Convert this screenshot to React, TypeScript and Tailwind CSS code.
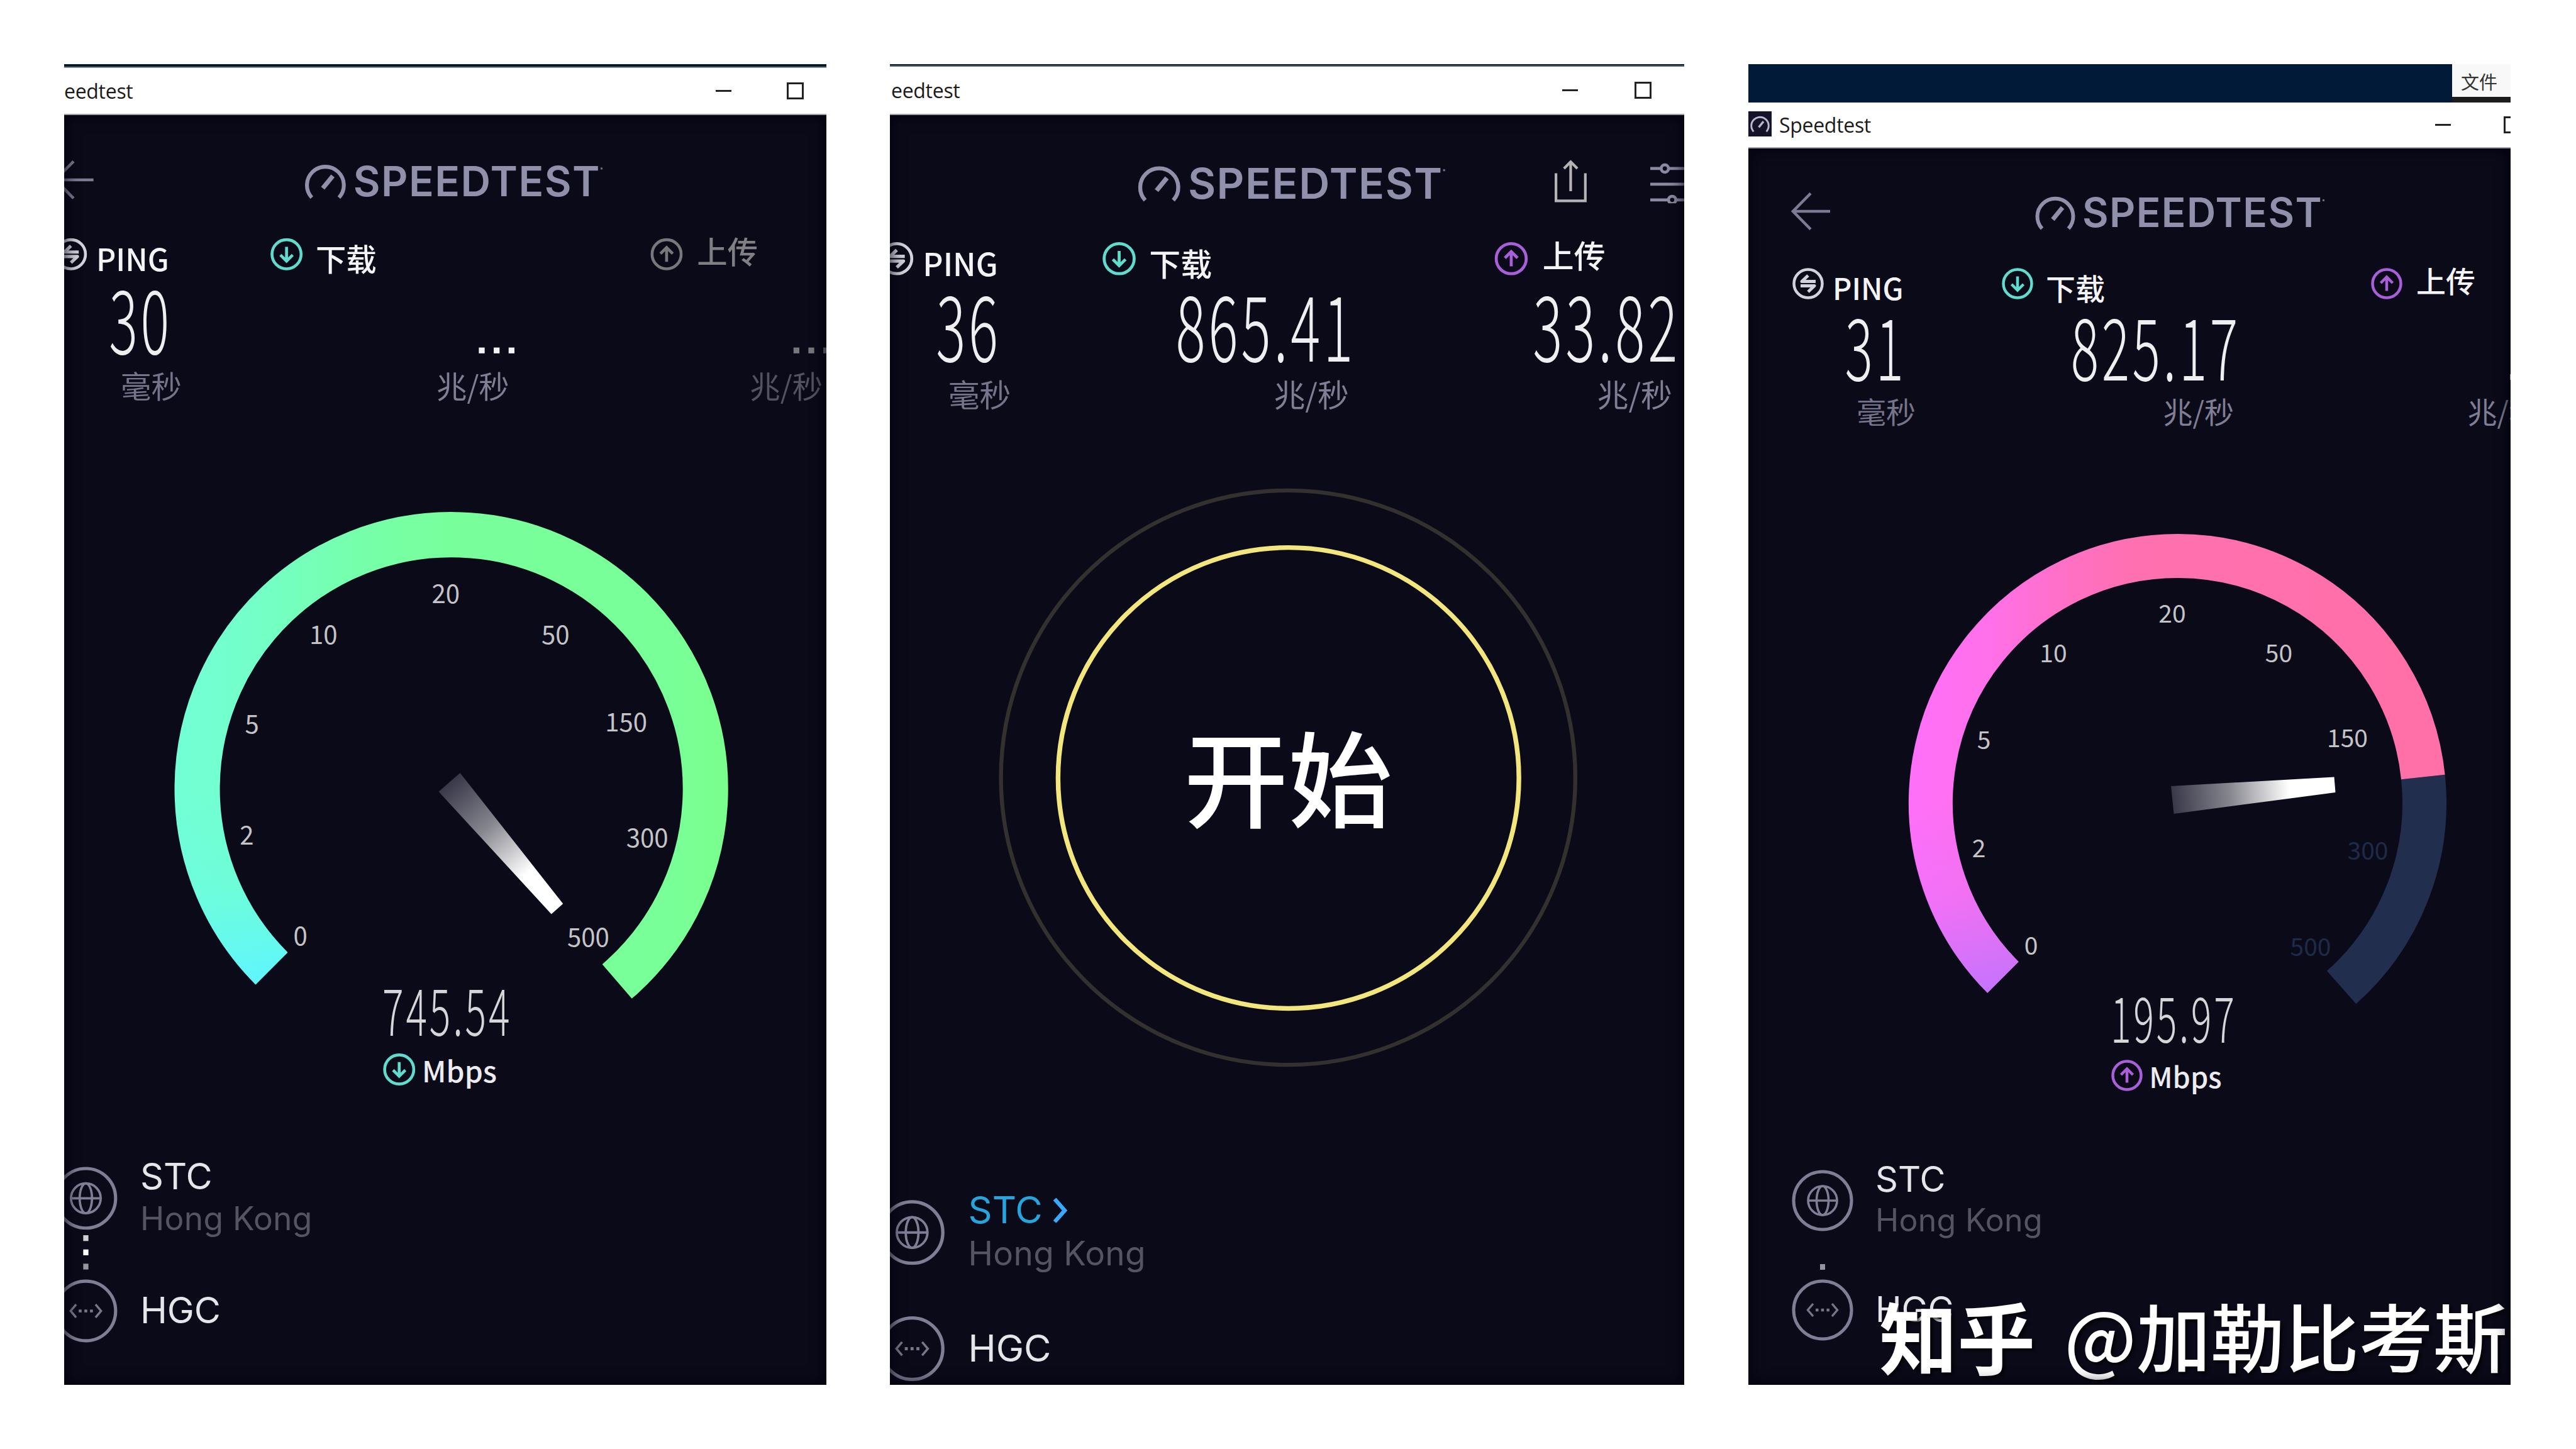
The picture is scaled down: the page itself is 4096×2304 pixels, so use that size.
import type { ReactNode } from "react";

const CJK = "font-['Noto_Sans_CJK_SC',sans-serif]";

type Tone = "mint" | "violet" | "idle" | "light";

const toneColor: Record<Tone, string> = {
  mint: "#5fdccb",
  violet: "#a95fd8",
  idle: "#77777c",
  light: "#d2d2dc",
};

function MeterGlyph({ className, stroke = "#9190aa" }: { className: string; stroke?: string }) {
  return (
    <svg viewBox="0 0 64 58" className={className} fill="none" stroke={stroke} strokeWidth="6">
      <path d="M11 54.5 A28.5 28.5 0 1 1 53 54.5" />
      <path d="M28 40 L43.5 21" strokeWidth="7" />
    </svg>
  );
}

function CircleIcon({ tone, kind }: { tone: Tone; kind: "down" | "up" | "ping" }) {
  const c = toneColor[tone];
  return (
    <svg viewBox="0 0 50 50" className="size-[50px] shrink-0" fill="none" stroke={c} strokeWidth="4.5">
      <circle cx="25" cy="25" r="22.5" />
      {kind === "down" && <path d="M25 13.5 V35 M15.5 26 L25 35.5 L34.5 26" />}
      {kind === "up" && <path d="M25 36.5 V15 M15.5 24 L25 14.5 L34.5 24" />}
      {kind === "ping" && (
        <path d="M37 21.5 H15 L25 12 M13 28.5 H35 L25 38" strokeWidth="5" strokeLinejoin="round" />
      )}
    </svg>
  );
}

function BackArrow() {
  return (
    <svg viewBox="0 0 62 60" className="h-[60px] w-[62px]" fill="none" stroke="#7c7b93" strokeWidth="4.5">
      <path d="M62 30 H3 M31 1.5 L3 30 L31 58.5" />
    </svg>
  );
}

function ShareIcon() {
  return (
    <svg viewBox="0 0 48 64" className="h-[64px] w-[48px]" fill="none" stroke="#b5b3b5" strokeWidth="4">
      <path d="M2 20 V61.5 H46 V20" />
      <path d="M24 47 V3 M14 13 L24 3 L34 13" />
    </svg>
  );
}

function SlidersIcon() {
  return (
    <svg viewBox="0 0 64 64" className="h-[64px] w-[64px]" fill="none" stroke="#8b8aa2" strokeWidth="4.5">
      <path d="M0 12 H15 M29 12 H64 M0 35.5 H64 M0 59 H26 M40 59 H64" />
      <circle cx="22" cy="12" r="5.5" />
      <circle cx="33" cy="59" r="5.5" />
    </svg>
  );
}

function Header({ back, tools }: { back: boolean; tools: boolean }) {
  return (
    <div className="flex h-[190px] items-start">
      <div className="mt-[70px] ml-[68px] h-[60px] w-[62px]">{back && <BackArrow />}</div>
      <div className="mt-[73px] ml-[326px] flex w-[623px] items-start">
        <MeterGlyph className="h-[58px] w-[64px]" />
        <span className="mt-[-2px] ml-[11px] font-['Inter',sans-serif] text-[64px] leading-[62px] font-semibold tracking-[1.4px] text-[#9190aa]">
          SPEEDTEST
        </span>
        <span className="mt-[8px] size-[3px] bg-[#6d6c84]" />
      </div>
      {tools && (
        <>
          <div className="mt-[67px] ml-[1px]">
            <ShareIcon />
          </div>
          <div className="mt-[68px] ml-[95px]">
            <SlidersIcon />
          </div>
        </>
      )}
    </div>
  );
}

function Ellipsis({ color }: { color: string }) {
  return (
    <span className="mr-[3px] flex gap-[14px] pb-[6px]">
      {[0, 1, 2].map((i) => (
        <span key={i} className="size-[9px]" style={{ background: color }} />
      ))}
    </span>
  );
}

function Digits({ children, className }: { children: ReactNode; className: string }) {
  return (
    <span className={`inline-block scale-x-[0.61] ${CJK} font-light whitespace-nowrap ${className}`}>{children}</span>
  );
}

interface MetricProps {
  icon: ReactNode;
  label: string;
  labelClass: string;
  value: ReactNode;
  valueClass: string;
  unit: string;
  unitClass: string;
  className: string;
}

function Metric({ icon, label, labelClass, value, valueClass, unit, unitClass, className }: MetricProps) {
  return (
    <div className={`flex shrink-0 flex-col ${className}`}>
      <div className="flex h-[74px] items-start">
        {icon}
        <span className={`${CJK} font-medium whitespace-nowrap ${labelClass}`}>{label}</span>
      </div>
      <div className={`flex h-[110px] items-end justify-end ${valueClass}`}>{value}</div>
      <div className={`mt-[13px] flex h-[60px] justify-end ${CJK} text-[47px] leading-[60px] whitespace-nowrap ${unitClass}`}>
        {unit}
      </div>
    </div>
  );
}

interface GaugeProps {
  id: string;
  stops: [string, string][];
  startColor: string;
  endAngle: number;
  splitAngle?: number;
  needle: string;
  needleLine: [number, number, number, number];
}

const ticks: [string, number, number][] = [
  ["0", 267.5, 668],
  ["2", 184.5, 513],
  ["5", 192.5, 341],
  ["10", 303, 203],
  ["20", 492, 140],
  ["50", 661.5, 203],
  ["150", 770.5, 338],
  ["300", 803, 517],
  ["500", 712, 670],
];

function point(deg: number, r: number) {
  const a = (deg * Math.PI) / 180;
  return `${(500.5 + r * Math.cos(a)).toFixed(2)} ${(440.5 + r * Math.sin(a)).toFixed(2)}`;
}

function arc(from: number, to: number) {
  const large = to - from > 180 ? 1 : 0;
  return `M${point(from, 392.5)} A392.5 392.5 0 ${large} 1 ${point(to, 392.5)}`;
}

function Gauge({ id, stops, startColor, endAngle, splitAngle, needle, needleLine }: GaugeProps) {
  const filled = splitAngle ?? endAngle;
  const [x1, y1, x2, y2] = needleLine;
  return (
    <svg viewBox="0 0 1000 730" className="ml-[182px] h-[730px] w-[1000px] shrink-0 overflow-visible">
      <defs>
        <linearGradient id={`${id}-arc`} gradientUnits="userSpaceOnUse" x1="72" y1="440" x2="928" y2="440">
          {stops.map(([offset, color]) => (
            <stop key={offset} offset={offset} stopColor={color} />
          ))}
        </linearGradient>
        <linearGradient id={`${id}-start`} gradientUnits="userSpaceOnUse" x1="150" y1="430" x2="220" y2="740">
          <stop offset="0" stopColor={startColor} stopOpacity="0" />
          <stop offset="0.5" stopColor={startColor} stopOpacity="0.25" />
          <stop offset="1" stopColor={startColor} />
        </linearGradient>
        <linearGradient id={`${id}-needle`} gradientUnits="userSpaceOnUse" x1={x1} y1={y1} x2={x2} y2={y2}>
          <stop offset="0" stopColor="#393849" />
          <stop offset="0.35" stopColor="#85858e" />
          <stop offset="0.72" stopColor="#ffffff" />
        </linearGradient>
      </defs>
      {splitAngle !== undefined && (
        <path d={arc(splitAngle, endAngle)} fill="none" stroke="#212e4e" strokeWidth="70" />
      )}
      <path d={arc(-225, filled)} fill="none" stroke={`url(#${id}-arc)`} strokeWidth="70" />
      <path d={arc(-225, -170)} fill="none" stroke={`url(#${id}-start)`} strokeWidth="70" />
      <polygon points={needle} fill={`url(#${id}-needle)`} />
      {ticks.map(([label, x, y], i) => (
        <text
          key={label}
          x={x}
          y={y + 14}
          textAnchor="middle"
          className={`${CJK} text-[39px]`}
          fill={splitAngle !== undefined && i > 6 ? "#1f2a49" : "#c4c4c7"}
        >
          {label}
        </text>
      ))}
    </svg>
  );
}

function Readout({ value, icon }: { value: string; icon: ReactNode }) {
  return (
    <div className="flex w-[1353px] flex-col items-center">
      <div className="mt-[-3px] flex h-[104px] w-full justify-center">
        <Digits className="text-[100px] leading-[104px] tracking-[6px] text-[#d6d6da]">{value}</Digits>
      </div>
      <div className="mt-[18px] ml-[-23px] flex items-start">
        {icon}
        <span className={`${CJK} mt-[-1px] ml-[10px] text-[45px] leading-[54px] font-medium text-[#ececf0]`}>Mbps</span>
      </div>
    </div>
  );
}

function StartButton() {
  return (
    <div className="ml-[248px] flex h-[866px] w-[866px] items-center justify-center rounded-full border-[6px] border-[#33312e]">
      <button className="flex size-[697px] items-center justify-center rounded-full border-[7px] border-[#f3e67d]">
        <span className={`${CJK} mt-[-11px] text-[156px] leading-[180px] font-medium text-white`}>开始</span>
      </button>
    </div>
  );
}

function Badge({ children }: { children: ReactNode }) {
  return (
    <svg viewBox="0 0 98 98" className="size-[98px] shrink-0" fill="none" stroke="#7f7e95">
      <circle cx="49" cy="49" r="46" strokeWidth="5" />
      {children}
    </svg>
  );
}

function Servers({ link, dots }: { link: boolean; dots: string[] }) {
  return (
    <div className="ml-[69px] flex">
      <div className="flex w-[98px] flex-col">
        <Badge>
          <g strokeWidth="3.6">
            <circle cx="49" cy="49" r="23" />
            <ellipse cx="49" cy="49" rx="9.5" ry="23" />
            <path d="M26 49 H72" />
          </g>
        </Badge>
        <div className="flex h-[76px] flex-col items-center gap-[13px] pt-[8px]">
          {dots.map((color, i) => (
            <span key={i} className="h-[9px] w-[8px]" style={{ background: color }} />
          ))}
        </div>
        <Badge>
          <g strokeWidth="3.4" stroke="#77768a">
            <path d="M34 39 L25.5 49 L34 59 M64 39 L72.5 49 L64 59" />
            <path d="M38 49 H60" strokeWidth="4.5" strokeDasharray="4.5 4.2" />
          </g>
        </Badge>
      </div>
      <div className="ml-[35px] flex flex-col font-['Inter',sans-serif] whitespace-nowrap">
        <div
          className={`mt-[-20px] flex items-center text-[56px] leading-[70px] ${link ? "text-[#25a5dc]" : "text-[#e6e6ea]"}`}
        >
          STC
          {link && (
            <svg viewBox="0 0 22 38" className="mt-[2px] ml-[16px] h-[38px] w-[22px]" fill="none" stroke="#38a9fb" strokeWidth="6">
              <path d="M2.5 2 L17.5 19 L2.5 36" />
            </svg>
          )}
        </div>
        <div className="text-[50px] leading-[60px] tracking-[0.3px] text-[#555463]">Hong Kong</div>
        <div className="mt-[77px] text-[56px] leading-[70px] text-[#e6e6ea]">HGC</div>
      </div>
    </div>
  );
}

interface TestProps {
  scaleClass: string;
  back: boolean;
  tools: boolean;
  ping: string;
  download: string | null;
  upload: string | null;
  uploadTone: Tone;
  stage: ReactNode;
  link: boolean;
  dots: string[];
}

function SpeedtestView(p: TestProps) {
  const idle = p.uploadTone === "idle";
  const big = "mb-[12px] origin-right text-[136px] leading-[104px] tracking-[7.5px] text-[#efeff2]";
  return (
    <div className={`flex h-[1966px] w-[1400px] shrink-0 origin-top-left flex-col ${p.scaleClass}`}>
      <Header back={p.back} tools={p.tools} />
      <div className="flex h-[389px] pl-[70px]">
        <Metric
          className="w-[333px]"
          icon={<CircleIcon tone="light" kind="ping" />}
          label="PING"
          labelClass="ml-[14px] mt-[6px] text-[47px] leading-[50px] text-[#f4f4f6]"
          value={<Digits className={big}>{p.ping}</Digits>}
          valueClass="pr-[151px]"
          unit="毫秒"
          unitClass="pr-[137px] text-[#75748a]"
        />
        <Metric
          className="w-[587px]"
          icon={<CircleIcon tone="mint" kind="down" />}
          label="下载"
          labelClass="ml-[20px] mt-[6px] text-[47px] leading-[50px] text-[#f4f4f6]"
          value={p.download ? <Digits className={big}>{p.download}</Digits> : <Ellipsis color="#f4f4f6" />}
          valueClass="pr-[207px]"
          unit="兆/秒"
          unitClass="pr-[218px] text-[#7f7e94]"
        />
        <Metric
          className="w-[410px]"
          icon={<CircleIcon tone={p.uploadTone} kind="up" />}
          label="上传"
          labelClass={`ml-[22px] mt-[-6px] text-[47px] leading-[50px] ${idle ? "text-[#808084]" : "text-[#f4f4f6]"}`}
          value={
            p.upload ? (
              <Digits className={big}>{p.upload}</Digits>
            ) : (
              <Ellipsis color={idle ? "#77777c" : "#f4f4f6"} />
            )
          }
          valueClass="pr-[131px]"
          unit="兆/秒"
          unitClass={`pr-[144px] ${idle ? "text-[#535262]" : "text-[#7f7e94]"}`}
        />
      </div>
      <div className="h-[1045px] shrink-0">{p.stage}</div>
      <Servers link={p.link} dots={p.dots} />
    </div>
  );
}

function Minimize() {
  return <span className="h-[3px] w-[25px] shrink-0 bg-[#222]" />;
}

function Maximize() {
  return <span className="h-[27px] w-[27px] shrink-0 border-[3px] border-[#222]" />;
}

const titleText =
  "shrink-0 font-['Open_Sans',sans-serif] text-[32px] leading-[40px] tracking-[-0.3px] whitespace-nowrap text-[#1b1b1b]";

function AppBody({ children }: { children: ReactNode }) {
  return (
    <div className="relative min-h-0 flex-1 overflow-hidden bg-[#0b0a19]">
      {children}
      <div className="pointer-events-none absolute inset-0 shadow-[inset_0_0_24px_0px_#02020c]" />
    </div>
  );
}

export default function App() {
  return (
    <main className="flex h-[2304px] w-[4096px] items-start bg-white pt-[102px] pl-[102px]">
      <section className="flex h-[2100px] w-[1212px] flex-col overflow-hidden">
        <div className="h-[6px] shrink-0 border-b-2 border-[#7c8290] bg-[#03172b]" />
        <div className="flex h-[75px] shrink-0 items-center border-b-2 border-[#a0a0a8] bg-white">
          <span className={`${titleText} w-[1036px]`}>eedtest</span>
          <Minimize />
          <div className="ml-[88px] flex">
            <Maximize />
          </div>
        </div>
        <AppBody>
          <SpeedtestView
            scaleClass="scale-[1.0295] ml-[-87px]"
            back
            tools={false}
            ping="30"
            download={null}
            upload={null}
            uploadTone="idle"
            link={false}
            dots={["#cfcfd4", "#ffffff", "#96959e"]}
            stage={
              <div className="pt-[21px]">
                <Gauge
                  id="down"
                  stops={[
                    ["0", "#72ffd6"],
                    ["0.15", "#74ffc8"],
                    ["0.35", "#76ffa8"],
                    ["0.5", "#78ff9c"],
                    ["0.9", "#78ff98"],
                    ["1", "#7aff8c"],
                  ]}
                  startColor="#5ff6ff"
                  endAngle={49.3}
                  needle="481,445 514,416 673,618 655,634"
                  needleLine={[498, 431, 664, 626]}
                />
                <Readout value="745.54" icon={<CircleIcon tone="mint" kind="down" />} />
              </div>
            }
          />
        </AppBody>
      </section>

      <section className="ml-[101px] flex h-[2100px] w-[1263px] flex-col overflow-hidden">
        <div className="h-[4px] shrink-0 border-b-2 border-[#5c6670] bg-[#03202b]" />
        <div className="flex h-[77px] shrink-0 items-center border-b-2 border-[#a0a0a8] bg-white">
          <span className={`${titleText} ml-[2px] w-[1067px]`}>eedtest</span>
          <Minimize />
          <div className="ml-[90px] flex">
            <Maximize />
          </div>
        </div>
        <AppBody>
          <SpeedtestView
            scaleClass="scale-[1.062] ml-[-90px]"
            back={false}
            tools
            ping="36"
            download="865.41"
            upload="33.82"
            uploadTone="violet"
            link
            dots={[]}
            stage={
              <div className="flex">
                <div className="mt-[-20px]">
                  <StartButton />
                </div>
              </div>
            }
          />
        </AppBody>
      </section>

      <section className="ml-[102px] flex h-[2100px] w-[1212px] flex-col overflow-hidden">
        <div className="flex h-[61px] shrink-0 bg-[#011a38]">
          <div className="ml-auto w-[93px] border-b-[9px] border-[#1c1c1e] bg-[#f8f8f8] pl-[14px]">
            <span className={`${CJK} block text-[29px] leading-[54px] text-[#333]`}>文件</span>
          </div>
        </div>
        <div className="flex h-[73px] shrink-0 items-center border-b-2 border-[#a0a0a8] bg-white">
          <div className="mt-[-3px] flex h-[40px] w-[37px] shrink-0 items-center justify-center bg-[#14132a]">
            <MeterGlyph className="h-[28px] w-[31px]" stroke="#b9b8cc" />
          </div>
          <span className={`${titleText} ml-[12px] w-[1043px]`}>Speedtest</span>
          <Minimize />
          <div className="ml-[84px] flex">
            <Maximize />
          </div>
        </div>
        <AppBody>
          <SpeedtestView
            scaleClass="scale-100"
            back
            tools={false}
            ping="31"
            download="825.17"
            upload={null}
            uploadTone="violet"
            link={false}
            dots={["transparent", "transparent", "#96959e"]}
            stage={
              <div className="pt-[21px]">
                <Gauge
                  id="up"
                  stops={[
                    ["0", "#ff70fa"],
                    ["0.15", "#ff70ea"],
                    ["0.3", "#ff70c4"],
                    ["0.42", "#ff70b0"],
                    ["1", "#ff70a8"],
                  ]}
                  startColor="#c573ff"
                  endAngle={48.4}
                  splitAngle={-6}
                  needle="490,414 494.5,458 751.5,424 749.5,399.5"
                  needleLine={[492, 436, 750, 411]}
                />
                <Readout value="195.97" icon={<CircleIcon tone="violet" kind="up" />} />
              </div>
            }
          />
          <div
            className={`absolute right-[5px] bottom-0 flex items-center whitespace-nowrap text-white [text-shadow:4px_4px_4px_#000a] ${CJK}`}
          >
            <span className="text-[124px] leading-[160px] font-bold">知乎</span>
            <span className="ml-[46px] text-[118px] leading-[160px] font-medium">@加勒比考斯</span>
          </div>
        </AppBody>
      </section>
    </main>
  );
}
